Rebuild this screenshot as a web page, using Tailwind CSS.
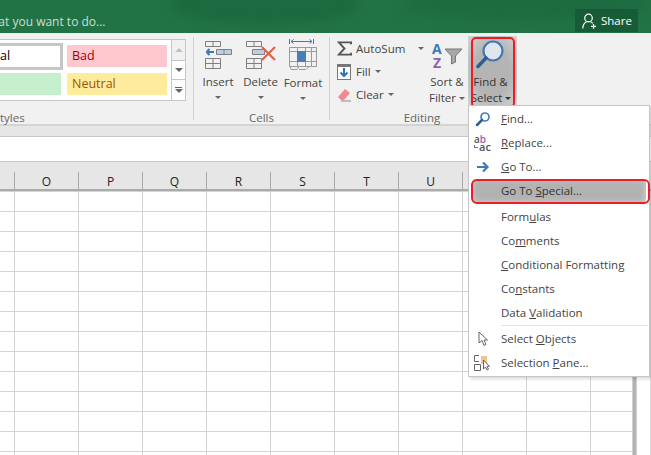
<!DOCTYPE html>
<html>
<head>
<meta charset="utf-8">
<script src="https://cdn.jsdelivr.net/npm/@tailwindcss/browser@4"></script>
</head>
<body class="w-[651px] h-[455px] overflow-hidden bg-white font-['Open_Sans','Noto_Sans',sans-serif] text-[11.5px] text-[#444]">
<div class="relative w-[651px] h-[455px] overflow-hidden">

  <!-- title bar -->
  <div class="relative h-[33px] bg-[#217346] flex items-end justify-between pr-[13px] pb-[1px] overflow-hidden">
    <div class="absolute left-[170px] -top-[14px] w-[190px] h-[38px] rounded-[50%] bg-[#1c6a3f] blur-[5px]"></div>
    <div class="absolute left-[400px] -top-[10px] w-[251px] h-[30px] rounded-[50%] bg-[#1d6b40] blur-[6px]"></div>
    <div class="relative text-[12px] text-[#c9dfd2] h-[23px] leading-[25px] -ml-[9px]">hat you want to do...</div>
    <div class="relative w-[63px] h-[23px] bg-[#185c37] flex items-center gap-[4px] pl-[7px] text-white">
      <svg width="15" height="16" viewBox="0 0 15 16" fill="none" stroke="#fff" stroke-width="1.200"><circle cx="6.500" cy="5" r="3.800"/><path d="M.8 15.500c0-3.500 1.800-5.800 3.700-6.800M8.500 8.700c1 .4 1.700 1 2.200 1.700M11.500 11v4.800M9 13.400h5"/></svg>
      <span class="text-[11.5px]">Share</span>
    </div>
  </div>

  <!-- ribbon -->
  <div class="h-[93px] bg-[#f1f1f1] border-b-2 border-[#d4d4d4] flex">
    <!-- styles -->
    <div class="relative w-[193px]">
      <div class="flex h-[62px] mt-[6px] w-[186px] border border-[#c6c6c6] border-l-0 bg-white">
        <div class="w-[171px] grid grid-cols-[61px_100px] grid-rows-[22px_22px] gap-x-[6px] gap-y-[6px] pt-[5px] text-[12.5px]">
          <div class="w-[63px] h-[27px] -mt-[2px] bg-white border-[3px] border-[#c6c6c6] border-l-0 text-black leading-[20px]">al</div>
          <div class="bg-[#ffc7ce] text-[#9c0006] leading-[22px] pl-[5px]">Bad</div>
          <div class="bg-[#c6efce]"></div>
          <div class="bg-[#ffeb9c] text-[#9c5700] leading-[22px] pl-[5px]">Neutral</div>
        </div>
        <div class="w-[14px] flex flex-col border-l border-[#c6c6c6] bg-[#f1f1f1]">
          <div class="h-[21px] border-b border-[#c6c6c6] flex items-center justify-center"><div class="w-0 h-0 border-x-[4px] border-x-transparent border-b-[4px] border-b-[#c0c0c0]"></div></div>
          <div class="h-[19px] bg-white border-b border-[#c6c6c6] flex items-center justify-center"><div class="w-0 h-0 border-x-[4px] border-x-transparent border-t-[4px] border-t-[#666]"></div></div>
          <div class="flex-1 bg-white flex flex-col items-center justify-center gap-[1px]"><div class="w-[7px] h-[1px] bg-[#666]"></div><div class="w-0 h-0 border-x-[4px] border-x-transparent border-t-[4px] border-t-[#666]"></div></div>
        </div>
      </div>
      <div class="absolute left-0 top-[76px] text-[#666]">tyles</div>
    </div>
    <div class="w-[1px] h-[83px] mt-[4px] bg-[#d0d0d0]"></div>

    <!-- cells -->
    <div class="relative w-[135px]">
      <div class="flex pl-[3px] pt-[8px]">
        <div class="w-[42px] flex flex-col items-center">
          <svg width="27" height="28" viewBox="0 0 27 28" fill="none" stroke="#7f7f7f">
            <path d="M.5.5h15v5h-15zM8 .5v5M.5 17.500h15v10h-15zM.5 22.500h15M8 17.500v10"/>
            <path d="M11.500 8.500h15v5h-15zM19 8.500v5" fill="#b9cfe4"/>
            <path d="M1.500 11H9M1.500 11l3-3M1.500 11l3 3" stroke="#3f78b5" stroke-width="2"/>
          </svg>
          <span class="mt-[5px] leading-[16px]">Insert</span>
          <div class="mt-[6px] w-0 h-0 border-x-[3px] border-x-transparent border-t-[3px] border-t-[#666]"></div>
        </div>
        <div class="w-[43px] flex flex-col items-center">
          <svg width="30" height="28" viewBox="0 0 30 28" fill="none" stroke="#7f7f7f">
            <path d="M.5.5h15v5h-15zM8 .5v5M.5 17.500h15v10h-15zM.5 22.500h15M8 17.500v10"/>
            <path d="M6.500 8.500h12v5h-12z" fill="#b9cfe4"/>
            <path d="M16 6l13 13M29 6L16 19" stroke="#d9634c" stroke-width="2.200"/>
          </svg>
          <span class="mt-[5px] leading-[16px]">Delete</span>
          <div class="mt-[6px] w-0 h-0 border-x-[3px] border-x-transparent border-t-[3px] border-t-[#666]"></div>
        </div>
        <div class="w-[42px] flex flex-col items-center">
          <svg width="28" height="32" viewBox="0 0 28 32" fill="none" class="-mt-[2px]">
            <path d="M.5 0v5M24.500 0v5M2 2.500h21M2 2.500l2.500-2M2 2.500l2.500 2M23 2.500l-2.500-2M23 2.500l-2.500 2" stroke="#3f78b5"/>
            <path d="M.5 8.500h27v19H.5zM.5 12.500h27M.5 22.500h27M8.500 8.500v19M16.500 8.500v19M22.500 8.500v19" stroke="#9a9a9a"/>
            <rect x="8" y="12" width="9" height="11" fill="#4a7ebb"/>
            <path d="M1 27.500l1 3h6l2-3M10 30.500h7l3-3" stroke="#9a9a9a"/>
          </svg>
          <span class="mt-[4px] leading-[16px]">Format</span>
          <div class="mt-[6px] w-0 h-0 border-x-[3px] border-x-transparent border-t-[3px] border-t-[#666]"></div>
        </div>
      </div>
      <div class="absolute left-0 right-0 top-[76px] text-center text-[#666]">Cells</div>
    </div>
    <div class="w-[1px] h-[83px] mt-[4px] bg-[#d0d0d0]"></div>

    <!-- editing -->
    <div class="relative w-[138px]">
      <div class="flex pl-[7px] pt-[4px]">
        <div class="w-[90px] flex flex-col">
          <div class="h-[23px] flex items-center gap-[4px]">
            <svg width="15" height="15" viewBox="0 0 16 16" fill="none" stroke="#555" stroke-width="2"><path d="M15 3.500V1.500H2l6 6.500-6 6.500h13v-2"/></svg>
            <span>AutoSum</span>
            <div class="ml-[9px] w-0 h-0 border-x-[3px] border-x-transparent border-t-[3px] border-t-[#666]"></div>
          </div>
          <div class="h-[23px] flex items-center gap-[4px]">
            <svg width="15" height="16" viewBox="0 0 15 16"><rect x=".5" y=".5" width="13" height="15" fill="#fff" stroke="#777"/><rect x="1" y="1" width="12" height="2" fill="#777"/><path d="M7 4v8M3.500 8.500L7 12l3.500-3.500" fill="none" stroke="#2e75b6" stroke-width="2"/></svg>
            <span>Fill</span>
            <div class="w-0 h-0 border-x-[3px] border-x-transparent border-t-[3px] border-t-[#666]"></div>
          </div>
          <div class="h-[23px] flex items-center gap-[4px]">
            <svg width="15" height="14" viewBox="0 0 15 14"><path d="M1 9l7-8 5 4-6 7H4z" fill="#ef8a94"/><path d="M4 13h10" stroke="#888"/></svg>
            <span>Clear</span>
            <div class="w-0 h-0 border-x-[3px] border-x-transparent border-t-[3px] border-t-[#666]"></div>
          </div>
        </div>
        <div class="w-[40px] flex flex-col items-center">
          <svg width="32" height="28" viewBox="0 0 32 28" class="mt-[4px]">
            <text x="1" y="13" font-size="14" font-weight="700" fill="#3f78b5" font-family="Open Sans">A</text>
            <text x="2" y="27" font-size="14" font-weight="700" fill="#8e62b0" font-family="Open Sans">Z</text>
            <path d="M14 8h17l-6.500 7v6l-4 2v-8z" fill="#a8a8a8" stroke="#777"/>
          </svg>
          <span class="mt-[5px] leading-[16px] whitespace-nowrap">Sort &amp;</span>
          <span class="leading-[16px] whitespace-nowrap flex items-center gap-[3px]">Filter<i class="block w-0 h-0 border-x-[3px] border-x-transparent border-t-[3px] border-t-[#666]"></i></span>
        </div>
      </div>
      <div class="absolute left-0 w-[184px] top-[76px] text-center text-[#666]">Editing</div>
    </div>

    <!-- find and select -->
    <div class="w-[49px] h-[70px] mt-[3px] bg-[radial-gradient(ellipse_at_center,#b4b4b4_50%,#d4d4d4_100%)] flex flex-col items-center text-[#333]">
      <svg width="28" height="29" viewBox="0 0 28 29" fill="none" class="mt-[4px] -ml-[5px]">
        <circle cx="17" cy="11" r="9.500" fill="#dfe6ef" stroke="#3f78b5" stroke-width="2.200"/>
        <path d="M10 18L2 26.500" stroke="#2e5f94" stroke-width="3.500" stroke-linecap="round"/>
      </svg>
      <span class="mt-[5px] -ml-[4px] leading-[16px] whitespace-nowrap">Find &amp;</span>
      <span class="-ml-[3px] leading-[16px] whitespace-nowrap flex items-center gap-[3px]">Select<i class="block w-0 h-0 border-x-[3px] border-x-transparent border-t-[3px] border-t-[#333]"></i></span>
    </div>
  </div>

  <!-- formula bar -->
  <div class="h-[10px] bg-[#e6e6e6]"></div>
  <div class="h-[26px] bg-white border-t border-b border-[#c8c8c8]"></div>

  <!-- column headers -->
  <div class="h-[29px] bg-[#e6e6e6] border-b-2 border-[#ababab] pt-[10px] flex text-[#222] text-[12px]">
    <div class="w-[15px] h-[19px] border-r border-[#ababab]"></div>
    <div class="w-[64px] h-[19px] border-r border-[#ababab] text-center leading-[19px]">O</div>
    <div class="w-[64px] h-[19px] border-r border-[#ababab] text-center leading-[19px]">P</div>
    <div class="w-[64px] h-[19px] border-r border-[#ababab] text-center leading-[19px]">Q</div>
    <div class="w-[64px] h-[19px] border-r border-[#ababab] text-center leading-[19px]">R</div>
    <div class="w-[64px] h-[19px] border-r border-[#ababab] text-center leading-[19px]">S</div>
    <div class="w-[64px] h-[19px] border-r border-[#ababab] text-center leading-[19px]">T</div>
    <div class="w-[64px] h-[19px] border-r border-[#ababab] text-center leading-[19px]">U</div>
  </div>

  <!-- cell grid with the sheet's right edge -->
  <div class="flex h-[264px] bg-white">
    <div class="w-[632px] bg-[linear-gradient(to_right,#d4d4d4_1px,transparent_1px),linear-gradient(to_bottom,#d4d4d4_1px,transparent_1px)] bg-[size:64px_20px] bg-[position:14px_0px]"></div>
    <div class="w-[5px] bg-[#b4b4b4] border-x border-[#d0d0d0]"></div>
    <div class="flex-1 border-r border-[#dcdcdc]"></div>
  </div>

  <!-- red highlight around the ribbon button -->
  <div class="absolute left-[471px] top-[37px] w-[44px] h-[71px] border-2 border-[#ee1c25] rounded-[5px]"></div>

  <!-- dropdown menu -->
  <div class="absolute left-[468px] top-[105px] w-[182px] h-[272px] pt-[1px] bg-white border border-[#c6c6c6] shadow-[2px_2px_3px_rgba(0,0,0,0.15)]">
    <div class="h-[24px] flex items-center">
      <svg width="16" height="16" viewBox="0 0 16 16" fill="none" class="ml-[6px]"><circle cx="10" cy="6" r="4" stroke="#4a7ebb" stroke-width="1.700" fill="#fff"/><path d="M7 9l-5 5" stroke="#2e5f94" stroke-width="2.500" stroke-linecap="round"/></svg>
      <span class="ml-[10px]"><u>F</u>ind...</span>
    </div>
    <div class="h-[24px] flex items-center">
      <div class="relative w-[18px] ml-[5px] flex flex-col leading-[8px] text-[10px] font-semibold">
        <span class="text-[#555]">a<span class="text-[#8e62b0]">b</span></span>
        <span class="text-[#555] pl-[5px] text-[11px]">ac</span>
        <i class="absolute left-[0px] top-[10px] w-[4px] h-[3px] border-l border-b border-[#3f78b5]"></i>
      </div>
      <span class="ml-[9px]"><u>R</u>eplace...</span>
    </div>
    <div class="h-[24px] flex items-center">
      <svg width="14" height="12" viewBox="0 0 14 12" fill="none" stroke="#3f78b5" stroke-width="2.200" class="ml-[7px]"><path d="M1 6h10M7 1.500L11.500 6 7 10.500"/></svg>
      <span class="ml-[11px]"><u>G</u>o To...</span>
    </div>
    <div class="h-[24px] pl-[29px] leading-[24px] mx-[3px] bg-[#b2b2b2] text-[#333] rounded-[4px] shadow-[inset_0_0_6px_rgba(255,255,255,0.5)]">Go To <u>S</u>pecial...</div>
    <div class="h-[24px] pl-[32px] leading-[24px] mt-[2px]">Form<u>u</u>las</div>
    <div class="h-[24px] pl-[32px] leading-[24px]">Co<u>m</u>ments</div>
    <div class="h-[24px] pl-[32px] leading-[24px]"><u>C</u>onditional Formatting</div>
    <div class="h-[24px] pl-[32px] leading-[24px]">Co<u>n</u>stants</div>
    <div class="h-[24px] pl-[32px] leading-[24px]">Data <u>V</u>alidation</div>
    <div class="h-[1px] bg-[#e1e1e1] ml-[32px] mr-[1px] mb-[1px]"></div>
    <div class="h-[24px] flex items-center">
      <svg width="10" height="16" viewBox="0 0 10 16" fill="#fff" stroke="#666" class="ml-[9px]"><path d="M1 1v11l3-2.500 2 5 2-1-2-4.500h3.500z"/></svg>
      <span class="ml-[13px]">Select <u>O</u>bjects</span>
    </div>
    <div class="h-[24px] flex items-center">
      <svg width="17" height="16" viewBox="0 0 17 16" fill="none" class="ml-[5px]"><path d="M5 .5H.5v6H5M.5 9.500h6v6h-6z" stroke="#666"/><rect x="7" y="1" width="6" height="8" fill="#f2c38f"/><path d="M9.500 5v9l2-2 1.500 3 1.500-.7-1.500-3h2.500z" fill="#fff" stroke="#666"/></svg>
      <span class="ml-[10px]">Selection <u>P</u>ane...</span>
    </div>
  </div>

  <!-- red highlight around menu row -->
  <div class="absolute left-[471px] top-[179px] w-[179px] h-[25px] border-2 border-[#ee1c25] rounded-[6px]"></div>
</div>
</body>
</html>
